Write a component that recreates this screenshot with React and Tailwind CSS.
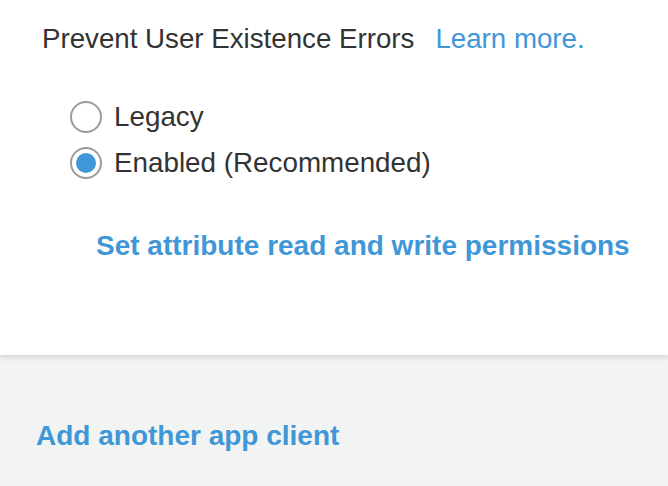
export default function App() {
  return (
    <div className="w-[668px] h-[486px] overflow-hidden bg-[#f2f3f3] font-['Liberation_Sans',Arial,sans-serif]">
      <div className="relative bg-white h-[355px] shadow-[0_2px_6px_rgba(0,0,0,0.15)] pt-[22px] pl-[42px]">
        <div className="flex items-center gap-[21px] text-[27.7px] leading-[34px]">
          <span className="text-[#333333]">Prevent User Existence Errors</span>
          <span className="text-[#3f97d7]">Learn more.</span>
        </div>
        <div className="flex flex-col gap-[14px] mt-[45px] ml-[28px]">
          <label className="flex items-center gap-[12px] text-[27.8px] leading-[32px] text-[#333333]">
            <span className="w-[32px] h-[32px] rounded-full border-[2px] border-[#9b9b9b] bg-white" />
            <span>Legacy</span>
          </label>
          <label className="flex items-center gap-[12px] text-[27.8px] leading-[32px] text-[#333333]">
            <span className="w-[32px] h-[32px] rounded-full border-[2px] border-[#9b9b9b] bg-white flex items-center justify-center">
              <span className="w-[20px] h-[20px] rounded-full bg-[#3f97d7]" />
            </span>
            <span>Enabled (Recommended)</span>
          </label>
        </div>
        <div className="mt-[50px] ml-[54px] text-[28px] leading-[34px] font-bold text-[#3f97d7]">
          Set attribute read and write permissions
        </div>
      </div>
      <div className="pt-[64px] pl-[36px] text-[28px] leading-[34px] font-bold text-[#3f97d7]">
        Add another app client
      </div>
    </div>
  );
}
